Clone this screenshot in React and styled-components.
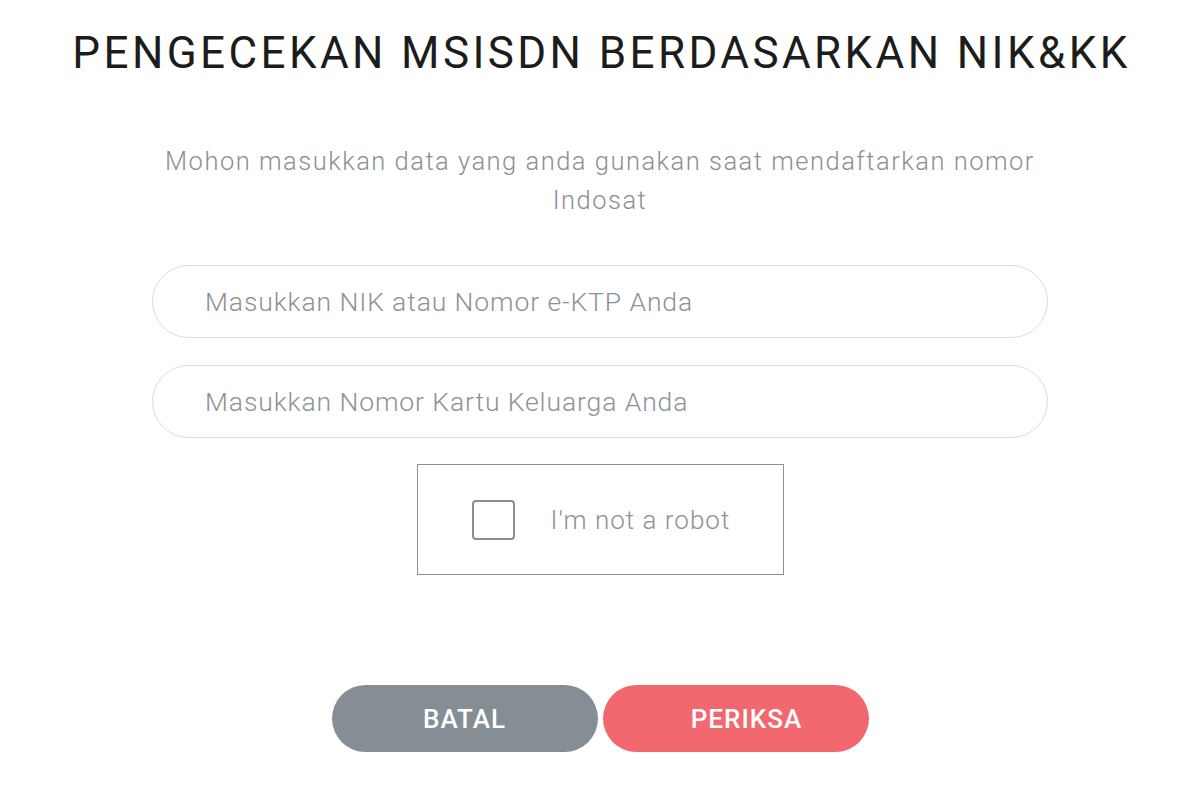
import React from "react";
import styled, { createGlobalStyle } from "styled-components";

const Global = createGlobalStyle`
  html, body { margin: 0; padding: 0; background: #ffffff; }
  body { font-family: Roboto, "Liberation Sans", Arial, sans-serif; }
  * { box-sizing: border-box; }
`;

const Page = styled.main`
  width: 1200px;
  height: 800px;
  display: flex;
  flex-direction: column;
  align-items: center;
  padding-top: 27px;
`;

const Title = styled.h1`
  margin: 0 0 0 3px;
  font-family: Roboto, "Liberation Sans", Arial, sans-serif;
  font-weight: 400;
  font-size: 44px;
  line-height: 52px;
  letter-spacing: 3.4px;
  color: #1c1c1c;
  white-space: nowrap;
`;

const Subtitle = styled.p`
  margin: 63px 0 0;
  width: 900px;
  text-align: center;
  font-family: Roboto, "Liberation Sans", Arial, sans-serif;
  font-weight: 300;
  font-size: 25.5px;
  line-height: 39px;
  letter-spacing: 1.5px;
  color: #8a9097;
`;

const Form = styled.form`
  margin-top: 45px;
  display: flex;
  flex-direction: column;
  align-items: center;
  gap: 27px;
`;

const Field = styled.input`
  width: 896px;
  height: 73px;
  border: 1.5px solid #dcdcdc;
  border-radius: 37px;
  padding: 0 0 0 52px;
  font-family: Roboto, "Liberation Sans", Arial, sans-serif;
  font-weight: 300;
  font-size: 26.5px;
  letter-spacing: 0.9px;
  color: #333;
  outline: none;
  background: #fff;
  &::placeholder { color: #8c9297; }
`;

const Captcha = styled.label`
  margin-top: -1px;
  width: 367px;
  height: 111px;
  border: 1.5px solid #8f8f8f;
  display: flex;
  align-items: center;
  padding-left: 54px;
  gap: 36px;
  cursor: pointer;
`;

const Check = styled.span`
  width: 43px;
  height: 40px;
  border: 2px solid #8e8e8e;
  border-radius: 4px;
  background: #fff;
`;

const CaptchaText = styled.span`
  font-family: Roboto, "Liberation Sans", Arial, sans-serif;
  font-weight: 300;
  font-size: 26px;
  letter-spacing: 1px;
  color: #8c9297;
`;

const Actions = styled.div`
  margin-top: 110px;
  display: flex;
  gap: 5px;
`;

const Button = styled.button`
  width: 266px;
  height: 67px;
  border: none;
  border-radius: 34px;
  padding: 0 0 0 ${(p) => p.$shift || 0}px;
  background: ${(p) => p.$bg};
  color: #fff;
  font-family: Roboto, "Liberation Sans", Arial, sans-serif;
  font-weight: 500;
  font-size: 26px;
  letter-spacing: 1px;
  cursor: pointer;
`;

export default function App() {
  return (
    <>
      <Global />
      <Page>
        <Title>PENGECEKAN MSISDN BERDASARKAN NIK&amp;KK</Title>
        <Subtitle>
          Mohon masukkan data yang anda gunakan saat mendaftarkan nomor Indosat
        </Subtitle>
        <Form onSubmit={(e) => e.preventDefault()}>
          <Field placeholder="Masukkan NIK atau Nomor e-KTP Anda" />
          <Field placeholder="Masukkan Nomor Kartu Keluarga Anda" />
          <Captcha>
            <Check />
            <CaptchaText>I'm not a robot</CaptchaText>
          </Captcha>
        </Form>
        <Actions>
          <Button type="button" $bg="#858d95">BATAL</Button>
          <Button type="button" $bg="#f2686f" $shift={22}>PERIKSA</Button>
        </Actions>
      </Page>
    </>
  );
}
